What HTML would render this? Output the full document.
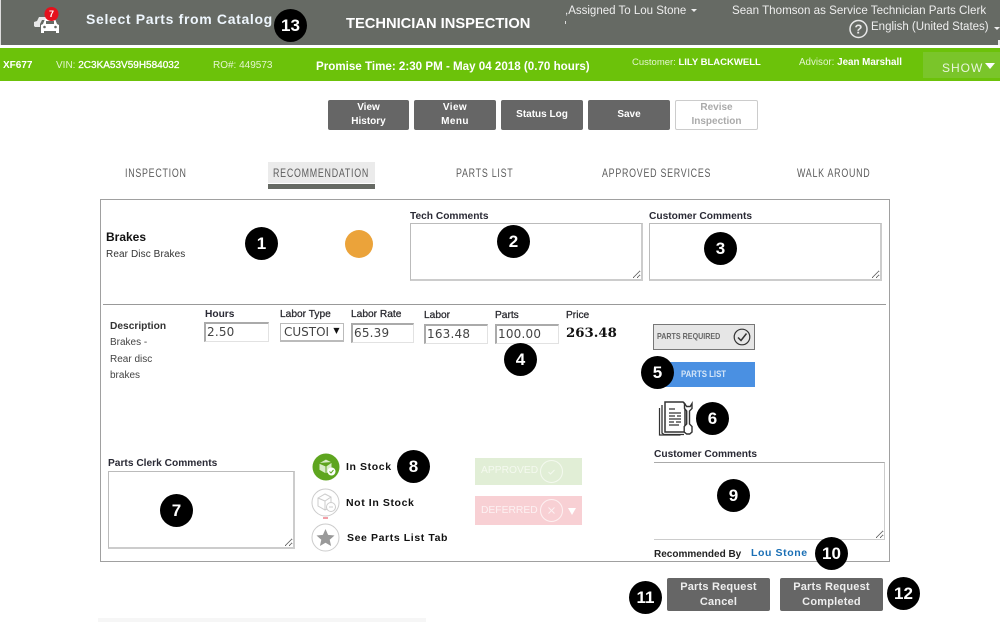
<!DOCTYPE html>
<html><head><meta charset="utf-8"><style>
html,body{margin:0;padding:0;background:#fff}
body{width:1000px;height:622px;position:relative;overflow:hidden;font-family:"Liberation Sans",sans-serif;color:#222}
.a{position:absolute;white-space:nowrap}
.n{position:absolute;width:33px;height:33px;border-radius:50%;background:#000;color:#fff;font:bold 17px/33px "Liberation Sans",sans-serif;text-align:center}
.b{position:absolute;background:#666;color:#fff;font:bold 10px/14.5px "Liberation Sans",sans-serif;text-align:center;border-radius:2px;display:flex;align-items:center;justify-content:center}
.tab{position:absolute;font:12px/12px "Liberation Sans",sans-serif;letter-spacing:1px;color:#5c5c5c;white-space:nowrap;transform:scaleX(.74);transform-origin:0 0}
.l{position:absolute;white-space:nowrap;font:bold 10.2px/12px "Liberation Sans",sans-serif;color:#2a2a35}
.m{font-weight:normal;-webkit-text-stroke:.25px #222}
.i{position:absolute;box-sizing:border-box;height:20px;border:1px solid #e2e2e2;border-top:2px solid #aaa;border-left:2px solid #aaa;font:12px/17px "DejaVu Sans",sans-serif;letter-spacing:.2px;color:#444;padding-left:1px;background:#fff}
textarea{position:absolute;box-sizing:border-box;border:1px solid #bbb;border-bottom:2px solid #ccc;border-right:2px solid #ccc;margin:0;padding:0;background:#fff;outline:none}
</style></head><body>

<div class="a" style="left:0;top:0;width:1000px;height:45px;background:#666a64"></div>
<div class="a" style="left:0;top:45px;width:1000px;height:3px;background:#fff"></div>
<div class="a" style="left:0;top:0;width:1px;height:45px;background:#ddd"></div>
<div class="a" style="left:0;top:48px;width:1000px;height:33px;background:#6cc20a"></div>

<svg class="a" style="left:33px;top:6px" width="28" height="30" viewBox="0 0 28 30">
<path d="M1 20v-4l3-1 2-4h8l2 3H9l-2 4v3H2z" fill="#e8e8e8"/>
<path d="M8 27v-8l2-1 2-5h10l2 5 2 1v8h-3v-2H11v2z" fill="#fff"/>
<rect x="13" y="15" width="8" height="3" fill="#666a64"/>
<circle cx="11.500" cy="21" r="1.300" fill="#666a64"/><circle cx="22.500" cy="21" r="1.300" fill="#666a64"/>
<circle cx="18.500" cy="8" r="7" fill="#e5111c"/>
<text x="18.500" y="11" font-size="9" font-weight="bold" font-family="Liberation Sans" fill="#fff" text-anchor="middle">7</text>
</svg>

<div class="a" style="left:86px;top:11px;font:bold 14px/16px 'Liberation Sans',sans-serif;letter-spacing:.66px;color:#eef6fd">Select Parts from Catalog</div>
<div class="a" style="left:346px;top:16px;font:bold 14.700px/17px 'Liberation Sans',sans-serif;color:#fff">TECHNICIAN INSPECTION</div>
<div class="a" style="left:565px;top:4px;font:11.500px/14px 'Liberation Sans',sans-serif;color:#eee">,Assigned To Lou Stone</div>
<div class="a" style="left:691px;top:9px;width:0;height:0;border:3px solid transparent;border-top:3px solid #eee"></div>
<div class="a" style="left:565px;top:21px;width:1px;height:3px;background:#ddd"></div>
<div class="a" style="left:732px;top:4px;font:11.600px/14px 'Liberation Sans',sans-serif;color:#eee">Sean Thomson as Service Technician Parts Clerk</div>
<svg class="a" style="left:849px;top:19px" width="20" height="20"><circle cx="9.500" cy="10" r="8.500" fill="none" stroke="#e8e8e8" stroke-width="1.500"/><text x="9.500" y="14.500" font-size="13" font-weight="bold" font-family="Liberation Sans" fill="#e8e8e8" text-anchor="middle">?</text></svg>
<div class="a" style="left:871px;top:20px;font:11.500px/14px 'Liberation Sans',sans-serif;color:#eee">English (United States)</div>
<div class="a" style="left:994px;top:27px;width:0;height:0;border:3px solid transparent;border-top:3px solid #eee"></div>
<div class="a" style="left:998px;top:40px;width:2px;height:5px;background:#eee"></div>

<div class="a" style="left:3px;top:60px;font:bold 10px/12px 'Liberation Sans',sans-serif;color:#fff">XF677</div>
<div class="a" style="left:56px;top:60px;font:10px/12px 'Liberation Sans',sans-serif;color:#e4f5d0">VIN: <b style="color:#fff;font-weight:normal;-webkit-text-stroke:.3px #fff">2C3KA53V59H584032</b></div>
<div class="a" style="left:213px;top:60px;font:10px/12px 'Liberation Sans',sans-serif;color:#e4f5d0">RO#: 449573</div>
<div class="a" style="left:316px;top:60px;font:bold 11.600px/14px 'Liberation Sans',sans-serif;color:#fff">Promise Time: 2:30 PM - May 04 2018 (0.70 hours)</div>
<div class="a" style="left:632px;top:57px;font:9.500px/12px 'Liberation Sans',sans-serif;color:#e4f5d0">Customer: <b style="color:#fff">LILY BLACKWELL</b></div>
<div class="a" style="left:799px;top:57px;font:9.800px/12px 'Liberation Sans',sans-serif;color:#e4f5d0">Advisor: <b style="color:#fff">Jean Marshall</b></div>
<div class="a" style="left:923px;top:52px;width:77px;height:26px;background:#7ac52a"></div>
<div class="a" style="left:942px;top:61px;font:12px/14px 'Liberation Sans',sans-serif;letter-spacing:1px;color:#e8f5dc">SHOW</div>
<div class="a" style="left:985px;top:63px;width:0;height:0;border:5.500px solid transparent;border-top:6px solid #fff;border-bottom:0"></div>

<div class="b" style="left:328px;top:100px;width:81px;height:30px">View<br>History</div>
<div class="b" style="left:414px;top:100px;width:82px;height:30px;letter-spacing:.4px">View<br>Menu</div>
<div class="b" style="left:501px;top:100px;width:82px;height:30px">Status Log</div>
<div class="b" style="left:588px;top:100px;width:82px;height:30px">Save</div>
<div class="b" style="left:675px;top:100px;width:83px;height:30px;box-sizing:border-box;background:#fff;border:1px solid #ccc;color:#aaa">Revise<br>Inspection</div>

<div class="tab" style="left:125px;top:167px">INSPECTION</div>
<div class="a" style="left:268px;top:162px;width:107px;height:21px;background:#ebebeb"></div>
<div class="a" style="left:268px;top:184px;width:107px;height:5px;background:#666a64"></div>
<div class="tab" style="left:273px;top:167px">RECOMMENDATION</div>
<div class="tab" style="left:456px;top:167px">PARTS LIST</div>
<div class="tab" style="left:602px;top:167px">APPROVED SERVICES</div>
<div class="tab" style="left:797px;top:167px">WALK AROUND</div>

<div class="a" style="left:100px;top:199px;width:790px;height:363px;box-sizing:border-box;border:1px solid #a0a0a0"></div>

<div class="a" style="left:106px;top:230px;font:bold 12px/14px 'Liberation Sans',sans-serif;color:#111">Brakes</div>
<div class="a" style="left:106px;top:249px;font:10px/12px 'Liberation Sans',sans-serif;letter-spacing:.1px;color:#333">Rear Disc Brakes</div>
<div class="a" style="left:345px;top:230px;width:28px;height:28px;border-radius:50%;background:#eba33a"></div>
<div class="l" style="left:410px;top:211px">Tech Comments</div>
<textarea style="left:410px;top:223px;width:233px;height:58px"></textarea>
<div class="l" style="left:649px;top:211px">Customer Comments</div>
<textarea style="left:649px;top:223px;width:233px;height:58px"></textarea>
<div class="a" style="left:103px;top:304px;width:783px;height:1px;background:#999"></div>

<div class="l" style="left:110px;top:321px;color:#333">Description</div>
<div class="a" style="left:110px;top:335px;font:10px/16.500px 'Liberation Sans',sans-serif;color:#444">Brakes -<br>Rear disc<br>brakes</div>
<div class="l" style="left:205px;top:309px">Hours</div>
<div class="i" style="left:204px;top:322px;width:65px">2.50</div>
<div class="l m" style="left:280px;top:309px">Labor Type</div>
<div class="a" style="left:280px;top:323px;width:64px;height:19px;box-sizing:border-box;border:1px solid #bbb;border-bottom-width:2px;font:12px/17px 'DejaVu Sans',sans-serif;color:#444;padding-left:3px;overflow:hidden;background:#fff">CUSTOI</div>
<div class="a" style="left:330px;top:324px;width:13px;height:16px;background:#fff;font:8px/13px 'DejaVu Sans',sans-serif;color:#111;text-align:center">▼</div>
<div class="l m" style="left:351px;top:309px">Labor Rate</div>
<div class="i" style="left:351px;top:323px;width:63px">65.39</div>
<div class="l m" style="left:424px;top:310px">Labor</div>
<div class="i" style="left:424px;top:324px;width:64px">163.48</div>
<div class="l m" style="left:495px;top:310px">Parts</div>
<div class="i" style="left:495px;top:324px;width:64px">100.00</div>
<div class="l m" style="left:566px;top:310px">Price</div>
<div class="a" style="left:566px;top:326px;font:bold 13.300px/16px 'DejaVu Serif','Liberation Serif',serif;color:#111">263.48</div>

<div class="a" style="left:653px;top:324px;width:102px;height:26px;box-sizing:border-box;background:#e6e6e6;border:1px solid #777"></div>
<div class="a" style="left:657px;top:331px;font:bold 8.500px/11px 'Liberation Sans',sans-serif;color:#666;transform:scaleX(.84);transform-origin:0 0">PARTS REQUIRED</div>
<svg class="a" style="left:732px;top:327px" width="20" height="20"><circle cx="10" cy="10" r="7.800" fill="none" stroke="#333" stroke-width="1.200"/><path d="M6 10.500l3 3 5.500-7" fill="none" stroke="#333" stroke-width="1.500"/></svg>
<div class="a" style="left:655px;top:362px;width:100px;height:25px;background:#4a90e2"></div>
<div class="a" style="left:681px;top:369px;font:bold 9px/11px 'Liberation Sans',sans-serif;color:#d5e6f8;transform:scaleX(.87);transform-origin:0 0">PARTS LIST</div>

<svg class="a" style="left:658px;top:400px" width="36" height="36" viewBox="0 0 36 36" fill="none" stroke="#333">
<path d="M4 5v28l2 1.500h20" stroke-width="1.300"/><path d="M1.500 8v27h21" stroke-width="1.200"/>
<path d="M7 32V2h18l2 2v28z" stroke-width="1.500" fill="#fff"/>
<path d="M11 9h6M11 13h12M11 16h6M19 16h4M11 19h12M11 22h5M18 22h5M11 25h10" stroke-width="1.300"/>
<path d="M26.500 3.500v5l2.200 2.500v13l-2.500 2.500v5.500l2.500 2h3l2.300-2v-5.500l-2.500-2.500V11l2.500-2.500v-5l-1.800 3h-3.500z" stroke-width="1.400" fill="#fff"/>
</svg>

<div class="l" style="left:108px;top:458px">Parts Clerk Comments</div>
<textarea style="left:108px;top:471px;width:187px;height:78px"></textarea>

<svg class="a" style="left:311px;top:452px" width="30" height="30"><circle cx="15" cy="15" r="13.500" fill="#5ea51f"/><path d="M8 11l7-4 6 3v9l-6 3-7-4zM8 11l7 3 6-4M15 14v8" fill="#d8ecc8" stroke="#5ea51f"/><circle cx="20.500" cy="19.500" r="4" fill="#fff"/><path d="M18.500 19.500l1.500 1.500 2.500-3" stroke="#5ea51f" fill="none"/></svg>
<div class="a" style="left:346px;top:461px;font:bold 10.500px/13px 'Liberation Sans',sans-serif;letter-spacing:.6px;color:#111">In Stock</div>
<svg class="a" style="left:310px;top:487px" width="31" height="33" fill="none" stroke="#ccc"><circle cx="15.500" cy="15.500" r="13.500"/><path d="M8 11l7-4 6 3v10l-6 3-7-4zM8 11l7 3 6-4M15 14v9"/><circle cx="21" cy="20" r="4.500" fill="#fff"/><path d="M19 20h4"/><path d="M13 31h5" stroke="#f2a0a8" stroke-width="2"/></svg>
<div class="a" style="left:346px;top:497px;font:bold 10.500px/13px 'Liberation Sans',sans-serif;letter-spacing:.6px;color:#111">Not In Stock</div>
<svg class="a" style="left:310px;top:522px" width="31" height="32"><circle cx="15.500" cy="15.500" r="13.500" fill="none" stroke="#ccc"/><path d="M15.500 7l2.600 5.900 6.400.6-4.800 4.200 1.400 6.300-5.600-3.300-5.600 3.300 1.400-6.300-4.800-4.200 6.400-.6z" fill="#999"/></svg>
<div class="a" style="left:347px;top:532px;font:bold 10.500px/13px 'Liberation Sans',sans-serif;letter-spacing:.6px;color:#111">See Parts List Tab</div>

<div class="a" style="left:475px;top:458px;width:107px;height:27px;background:#e1eed6"></div>
<div class="a" style="left:481px;top:464px;font:10.300px/13px 'Liberation Sans',sans-serif;color:#f4f9ef">APPROVED</div>
<svg class="a" style="left:539px;top:459px" width="25" height="25" fill="none" stroke="#f4f9ef"><circle cx="12.500" cy="12.500" r="11"/><path d="M9.500 13l2 2 4-4"/></svg>
<div class="a" style="left:475px;top:496px;width:107px;height:29px;background:#f8d0d4"></div>
<div class="a" style="left:481px;top:504px;font:10.300px/13px 'Liberation Sans',sans-serif;color:#fdf1f2">DEFERRED</div>
<svg class="a" style="left:539px;top:498px" width="25" height="25" fill="none" stroke="#fdf1f2"><circle cx="12.500" cy="12.500" r="11"/><path d="M9.500 9.500l6 6M15.500 9.500l-6 6"/></svg>
<div class="a" style="left:568px;top:508px;width:0;height:0;border:4px solid transparent;border-top:7px solid #fff;border-bottom:0"></div>

<div class="l" style="left:654px;top:449px">Customer Comments</div>
<textarea style="left:654px;top:462px;width:231px;height:78px;border-top:1px solid #aaa;border-left:0;border-right:1px solid #ccc;border-bottom:1px solid #ccc"></textarea>
<div class="l" style="left:654px;top:549px;color:#222;font-size:10px">Recommended By</div>
<div class="a" style="left:751px;top:547px;font:bold 10.500px/13px 'Liberation Sans',sans-serif;letter-spacing:.6px;color:#1a6fb5">Lou Stone</div>

<div class="b" style="left:667px;top:578px;width:103px;height:33px;color:#eee;font-size:11px;letter-spacing:.2px">Parts Request<br>Cancel</div>
<div class="b" style="left:780px;top:578px;width:103px;height:33px;color:#eee;font-size:11px;letter-spacing:.2px">Parts Request<br>Completed</div>

<div class="a" style="left:98px;top:618px;width:328px;height:4px;background:#f6f6f6"></div>

<div class="n" style="left:274px;top:9px">13</div>
<div class="n" style="left:245px;top:227px">1</div>
<div class="n" style="left:497px;top:225px">2</div>
<div class="n" style="left:704px;top:232px">3</div>
<div class="n" style="left:504px;top:343px">4</div>
<div class="n" style="left:641px;top:356px">5</div>
<div class="n" style="left:696px;top:402px">6</div>
<div class="n" style="left:160px;top:494px">7</div>
<div class="n" style="left:397px;top:450px">8</div>
<div class="n" style="left:717px;top:479px">9</div>
<div class="n" style="left:815px;top:537px">10</div>
<div class="n" style="left:629px;top:581px">11</div>
<div class="n" style="left:887px;top:577px">12</div>
</body></html>
